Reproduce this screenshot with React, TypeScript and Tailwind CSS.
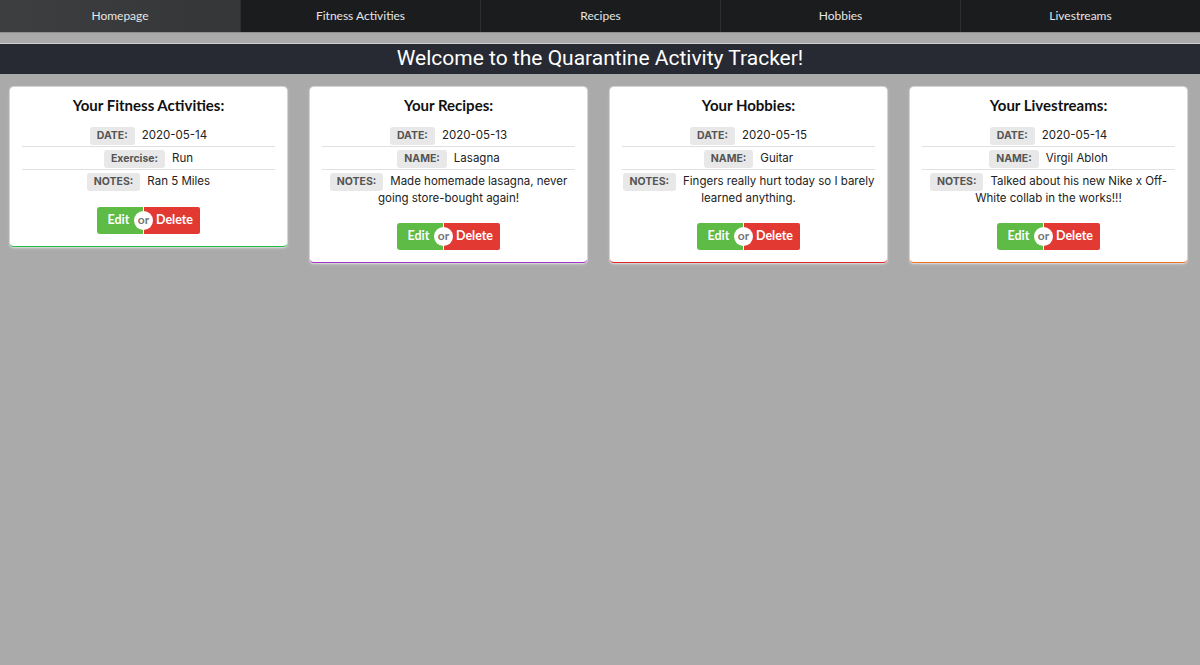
import type { ReactNode } from 'react'

type Field = { label: string; value: string }

interface Tracker {
  title: string
  accent: string
  fields: Field[]
}

const tabs = ['Homepage', 'Fitness Activities', 'Recipes', 'Hobbies', 'Livestreams']

const trackers: Tracker[] = [
  {
    title: 'Your Fitness Activities:',
    accent: 'border-b-[#21ba45]',
    fields: [
      { label: 'DATE:', value: '2020-05-14' },
      { label: 'Exercise:', value: 'Run' },
      { label: 'NOTES:', value: 'Ran 5 Miles' },
    ],
  },
  {
    title: 'Your Recipes:',
    accent: 'border-b-[#a333c8]',
    fields: [
      { label: 'DATE:', value: '2020-05-13' },
      { label: 'NAME:', value: 'Lasagna' },
      { label: 'NOTES:', value: 'Made homemade lasagna, never going store-bought again!' },
    ],
  },
  {
    title: 'Your Hobbies:',
    accent: 'border-b-[#db2828]',
    fields: [
      { label: 'DATE:', value: '2020-05-15' },
      { label: 'NAME:', value: 'Guitar' },
      { label: 'NOTES:', value: 'Fingers really hurt today so I barely learned anything.' },
    ],
  },
  {
    title: 'Your Livestreams:',
    accent: 'border-b-[#f2711c]',
    fields: [
      { label: 'DATE:', value: '2020-05-14' },
      { label: 'NAME:', value: 'Virgil Abloh' },
      { label: 'NOTES:', value: 'Talked about his new Nike x Off-White collab in the works!!!' },
    ],
  },
]

// grey pill in front of each value; negative margins keep it from growing the line box
function Label({ children }: { children: ReactNode }) {
  return (
    <span className="-my-[1px] mr-[7px] inline-block rounded-[3px] bg-[#e8e8e8] px-[7px] py-[3px] align-middle text-[10.5px] leading-[12px] font-bold text-[#555] [font-family:Inter,'Noto_Sans',sans-serif]">
      {children}
    </span>
  )
}

function TrackerCard({ tracker }: { tracker: Tracker }) {
  return (
    <div
      className={`rounded-[4px] border-b-[1.5px] bg-white px-[12px] pt-[8px] pb-[12px] shadow-[0_1px_3px_0_#d4d4d5,0_0_0_1px_#d4d4d5] ${tracker.accent}`}
    >
      <h2 className="text-center text-[15px] leading-[20px] font-bold text-[#111] [font-family:Lato,'Liberation_Sans',sans-serif]">
        {tracker.title}
      </h2>
      <div className="mt-[9px]">
        {tracker.fields.map((f, i) => (
          <div
            key={f.label}
            className={`pt-[3px] pb-[2px] text-center text-[11.5px] leading-[16px] text-[#222] [font-family:Inter,'Noto_Sans',sans-serif] ${
              i > 0 ? 'border-t border-[#e0e0e0]' : ''
            }`}
          >
            <Label>{f.label}</Label>
            {f.value}
          </div>
        ))}
      </div>
      <div className="mt-[15px] flex justify-center">
        <div className="relative flex text-[12.5px] font-bold text-white [font-family:Lato,'Liberation_Sans',sans-serif]">
          <button className="h-[27px] w-[46px] rounded-l-[3px] bg-[#5dbb46] pr-[3px]">Edit</button>
          <span className="ml-[1px] h-[27px]" />
          <button className="h-[27px] w-[56px] rounded-r-[2px] bg-[#e23a32] pl-[5px]">Delete</button>
          <span className="absolute top-[4px] left-[37px] flex h-[19px] w-[19px] items-center justify-center rounded-full bg-white text-[12px] leading-none font-bold text-[#777]">
            or
          </span>
        </div>
      </div>
    </div>
  )
}

export default function App() {
  return (
    <div className="min-h-[665px] bg-[#aaaaaa]">
      <nav className="grid h-[32px] grid-cols-5 bg-[#1b1c1d] text-[12px] text-[#e6e6e6] [font-family:Lato,'Liberation_Sans',sans-serif]">
        {tabs.map((t, i) => (
          <div
            key={t}
            className={`flex items-center justify-center ${i > 0 ? 'border-l border-[#2c2d2f]' : ''} ${
              i === 0 ? 'bg-gradient-to-r from-[#3d3e40] to-[#353638]' : ''
            }`}
          >
            {t}
          </div>
        ))}
      </nav>
      <div className="h-[12px] border-t border-[#8f8f8f] border-b border-b-[#cfcfcf] bg-[#aaaaaa]" />
      <header className="flex h-[30px] items-center justify-center bg-[#272a33] text-[21px] text-white [font-family:Roboto,'Liberation_Sans',sans-serif]">
        Welcome to the Quarantine Activity Tracker!
      </header>
      <main className="grid grid-cols-[277px_277px_277px_277px] items-start gap-x-[23px] pt-[13px] pl-[10px]">
        {trackers.map((t) => (
          <TrackerCard key={t.title} tracker={t} />
        ))}
      </main>
    </div>
  )
}
